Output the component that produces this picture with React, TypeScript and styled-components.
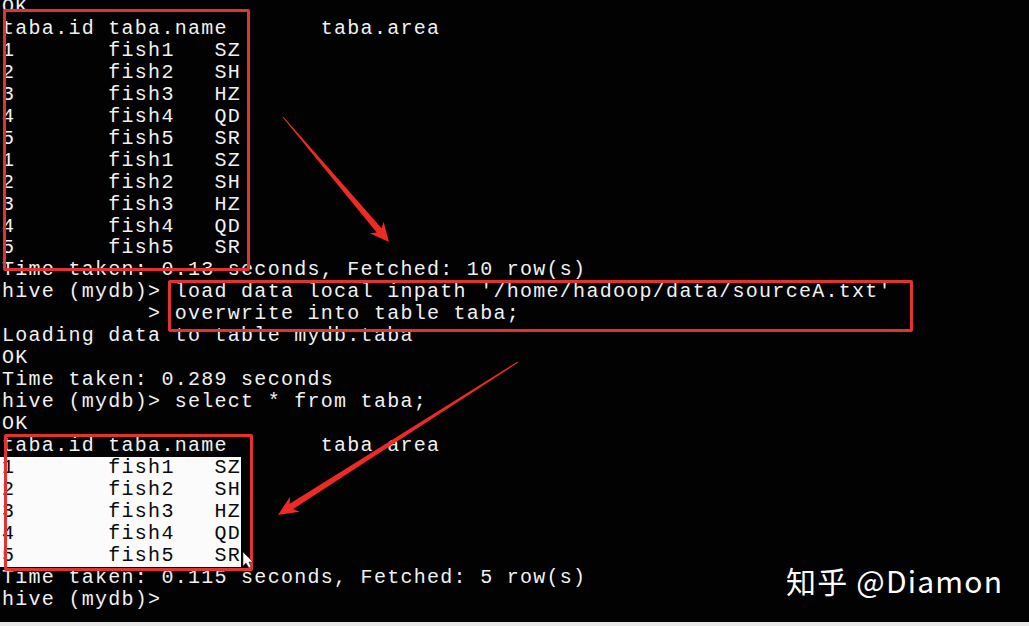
import React from "react";
import styled, { createGlobalStyle } from "styled-components";

const GlobalStyle = createGlobalStyle`
  html, body { margin: 0; padding: 0; background: #000; }
  body { width: 1029px; height: 626px; overflow: hidden; }
`;

const Screen = styled.div`
  position: relative;
  width: 1029px;
  height: 626px;
  display: flex;
  flex-direction: column;
  overflow: hidden;
`;

const Terminal = styled.div`
  flex: 1;
  background: #020202;
  overflow: hidden;
`;

const Output = styled.div`
  margin-top: -4px;
  padding-left: 2px;
  font-family: "Liberation Mono", "DejaVu Sans Mono", monospace;
  font-size: 20px;
  letter-spacing: 1.28px;
  color: #f1f1f1;
`;

const Line = styled.div`
  height: 21.96px;
  line-height: 21.96px;
  white-space: pre;
`;

const Selection = styled.div`
  width: 239px;
  margin-left: -2px;
  padding-left: 2px;
  background: #fbfbfb;
  color: #0a0a0a;
`;

const BottomStrip = styled.div`
  height: 4px;
  background: #e9e9e9;
`;

const Callout = styled.div<{ $x: number; $y: number; $w: number; $h: number }>`
  position: absolute;
  left: ${(p) => p.$x}px;
  top: ${(p) => p.$y}px;
  width: ${(p) => p.$w}px;
  height: ${(p) => p.$h}px;
  box-sizing: border-box;
  border: 3px solid #e23330;
  border-radius: 2px;
  pointer-events: none;
`;

const Overlay = styled.svg`
  position: absolute;
  left: 0;
  top: 0;
  width: 1029px;
  height: 626px;
  pointer-events: none;
`;

const Watermark = styled.div`
  position: absolute;
  left: 786px;
  top: 562px;
  font-family: "Noto Sans CJK SC", "Noto Sans", sans-serif;
  font-size: 30px;
  line-height: 36px;
  color: #ffffff;
  white-space: pre;
  letter-spacing: 1.2px;
`;

function arrowPoints(
  x1: number,
  y1: number,
  x2: number,
  y2: number,
  headLen: number,
  headW: number,
  w0: number,
  w1: number
) {
  const dx = x2 - x1;
  const dy = y2 - y1;
  const L = Math.sqrt(dx * dx + dy * dy);
  const ux = dx / L;
  const uy = dy / L;
  const px = -uy;
  const py = ux;
  const bx = x2 - ux * headLen;
  const by = y2 - uy * headLen;
  const nx = x2 - ux * headLen * 0.8;
  const ny = y2 - uy * headLen * 0.8;
  const pts = [
    [x1 + (px * w0) / 2, y1 + (py * w0) / 2],
    [nx + (px * w1) / 2, ny + (py * w1) / 2],
    [bx + px * headW, by + py * headW],
    [x2, y2],
    [bx - px * headW, by - py * headW],
    [nx - (px * w1) / 2, ny - (py * w1) / 2],
    [x1 - (px * w0) / 2, y1 - (py * w0) / 2],
  ];
  return pts.map((p) => `${p[0].toFixed(1)},${p[1].toFixed(1)}`).join(" ");
}

const header = "taba.id taba.name       taba.area";
const rows = [
  "1       fish1   SZ",
  "2       fish2   SH",
  "3       fish3   HZ",
  "4       fish4   QD",
  "5       fish5   SR",
];

export default function App() {
  return (
    <>
      <GlobalStyle />
      <Screen>
        <Terminal>
          <Output>
            <Line>OK</Line>
            <Line>{header}</Line>
            {rows.map((r, i) => (
              <Line key={"a" + i}>{r}</Line>
            ))}
            {rows.map((r, i) => (
              <Line key={"b" + i}>{r}</Line>
            ))}
            <Line>Time taken: 0.13 seconds, Fetched: 10 row(s)</Line>
            <Line>hive (mydb)&gt; load data local inpath '/home/hadoop/data/sourceA.txt'</Line>
            <Line>{"           > overwrite into table taba;"}</Line>
            <Line>Loading data to table mydb.taba</Line>
            <Line>OK</Line>
            <Line>Time taken: 0.289 seconds</Line>
            <Line>hive (mydb)&gt; select * from taba;</Line>
            <Line>OK</Line>
            <Line>{header}</Line>
            <Selection>
              {rows.map((r, i) => (
                <Line key={"c" + i}>{r}</Line>
              ))}
            </Selection>
            <Line>Time taken: 0.115 seconds, Fetched: 5 row(s)</Line>
            <Line>hive (mydb)&gt;</Line>
          </Output>
        </Terminal>
        <BottomStrip />

        <Callout $x={3} $y={9} $w={247} $h={262} />
        <Callout $x={168} $y={280} $w={745} $h={52} />
        <Callout $x={4} $y={434} $w={249} $h={137} />

        <Overlay viewBox="0 0 1029 626">
          <polygon
            points={arrowPoints(283, 117, 389, 242, 19, 9, 1, 6.5)}
            fill="#ee2a24"
          />
          <polygon
            points={arrowPoints(518, 362, 278, 515, 20, 9, 1.2, 6.5)}
            fill="#ee2a24"
          />
          <polygon
            points="243,552 243,566 246,563 249,568 251,567 249,562 253,562"
            fill="#ffffff"
            stroke="#333"
            strokeWidth="0.6"
          />
        </Overlay>

        <Watermark>知乎 @Diamon</Watermark>
      </Screen>
    </>
  );
}
